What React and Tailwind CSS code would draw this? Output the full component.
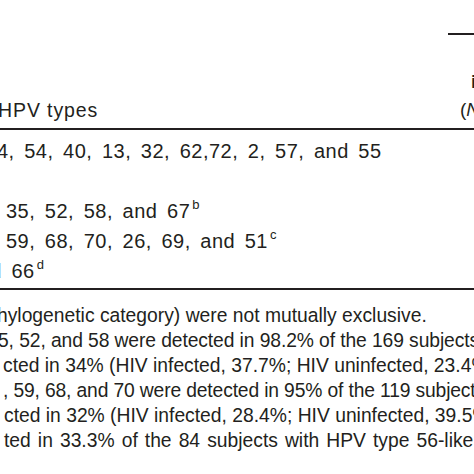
export default function App() {
  const fn = "whitespace-nowrap h-[25px] leading-[25px]";
  return (
    <div className="w-[474px] h-[474px] overflow-hidden bg-white text-[#231f20] font-['Liberation_Sans',Arial,sans-serif]">
      <div className="flex items-end justify-between h-[128px] pb-[4px]">
        <div className="text-[19.5px] leading-[28px] tracking-[0.9px] whitespace-nowrap -ml-[2px]">HPV types</div>
        <div className="w-[26px] flex flex-col pt-[33px] overflow-visible">
          <div className="h-[2px] w-full bg-[#231f20]"></div>
          <div className="mt-[33px] text-[19px] leading-[28px] whitespace-nowrap pl-[23px] font-bold">infected</div>
          <div className="text-[19px] leading-[28px] whitespace-nowrap pl-[12px]">(<i>N</i> = 169)</div>
        </div>
      </div>
      <div className="h-[2px] bg-[#231f20]"></div>
      <div className="flex flex-col pt-[6px] pb-[2px] text-[20px] leading-[30px] tracking-[0.5px] [word-spacing:3.5px]">
        <div className="h-[30px] whitespace-nowrap -ml-[3px]">4, 54, 40, 13, 32, 62,72, 2, 57, and 55</div>
        <div className="h-[30px]"></div>
        <div className="h-[30px] whitespace-nowrap pl-[6px]">35, 52, 58, and 67<sup className="relative top-[-9px] text-[13px] ml-[2px]">b</sup></div>
        <div className="h-[30px] whitespace-nowrap pl-[6px]">59, 68, 70, 26, 69, and 51<sup className="relative top-[-9px] text-[13px] ml-[2px]">c</sup></div>
        <div className="h-[30px] whitespace-nowrap -ml-[33px]">and 66<sup className="relative top-[-9px] text-[13px] ml-[2px]">d</sup></div>
      </div>
      <div className="h-[2px] bg-[#231f20]"></div>
      <div className="flex flex-col pt-[13px] text-[19.3px]">
        <div className={`${fn} -ml-[3px]`}>hylogenetic category) were not mutually exclusive.</div>
        <div className={`${fn} -ml-[2px] tracking-[-0.1px]`}>5, 52, and 58 were detected in 98.2% of the 169 subjects</div>
        <div className={`${fn} pl-[3px]`}>cted in 34% (HIV infected, 37.7%; HIV uninfected, 23.4%)</div>
        <div className={`${fn} pl-[3px] tracking-[-0.15px]`}>, 59, 68, and 70 were detected in 95% of the 119 subjects</div>
        <div className={`${fn} pl-[4px]`}>cted in 32% (HIV infected, 28.4%; HIV uninfected, 39.5%)</div>
        <div className={`${fn} pl-[4px] [word-spacing:1.7px]`}>ted in 33.3% of the 84 subjects with HPV type 56-like</div>
      </div>
    </div>
  );
}
